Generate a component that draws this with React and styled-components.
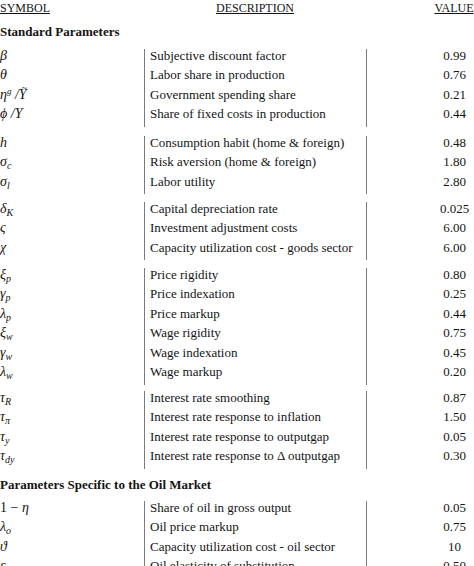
import React from "react";
import styled, { createGlobalStyle } from "styled-components";

const GlobalStyle = createGlobalStyle`
  html, body {
    margin: 0;
    padding: 0;
    background: #fff;
    overflow: hidden;
  }
  body {
    width: 474px;
    height: 566px;
    font-family: "Liberation Serif", "Times New Roman", serif;
    color: #141414;
  }
`;

const columns = "144px 222px 176px";

const Page = styled.div`
  width: 542px;
  display: flex;
  flex-direction: column;
`;

const Header = styled.div`
  display: grid;
  grid-template-columns: ${columns};
  height: 17px;
  line-height: 17px;
  font-size: 12px;
`;

const HeadCell = styled.div`
  text-align: ${(p) => (p.$center ? "center" : "left")};
  text-decoration: underline;
  text-underline-offset: 1px;
  text-decoration-thickness: 1px;
  white-space: nowrap;
`;

const Heading = styled.div`
  margin-top: ${(p) => p.$gap}px;
  font-size: 13px;
  font-weight: bold;
  line-height: 19.5px;
  white-space: nowrap;
`;

const Group = styled.div`
  margin-top: ${(p) => p.$gap}px;
  display: grid;
  grid-template-columns: ${columns};
  grid-auto-rows: 19.5px;
  font-size: 13px;
`;

const Cell = styled.div`
  line-height: 14.6px;
  padding-bottom: 4.9px;
  white-space: nowrap;
`;

const Symbol = styled(Cell)`
  font-style: italic;
  font-size: 14px;

  sub {
    font-size: 10px;
    vertical-align: -3px;
    line-height: 0;
  }
  sup {
    font-size: 9px;
    vertical-align: 5px;
    line-height: 0;
  }
`;

const Upright = styled.span`
  font-style: normal;
`;

const Tilde = styled.span`
  display: inline-block;
  position: relative;
  &::after {
    content: "~";
    position: absolute;
    left: 3px;
    top: -7px;
    font-size: 10px;
    font-style: normal;
  }
`;

const Description = styled(Cell)`
  border-left: 1px solid #7b7b7b;
  padding-left: 5px;
`;

const Value = styled(Cell)`
  border-left: 1px solid #7b7b7b;
  text-align: center;
`;

const groups = [
  {
    gap: 6.9,
    rows: [
      [<>β</>, "Subjective discount factor", "0.99"],
      [<>θ</>, "Labor share in production", "0.76"],
      [<>η<sup>g</sup> /<Tilde>Y</Tilde></>, "Government spending share", "0.21"],
      [<>ϕ /Y</>, "Share of fixed costs in production", "0.44"],
    ],
  },
  {
    gap: 9,
    rows: [
      [<>h</>, "Consumption habit (home & foreign)", "0.48"],
      [<>σ<sub>c</sub></>, "Risk aversion (home & foreign)", "1.80"],
      [<>σ<sub>l</sub></>, "Labor utility", "2.80"],
    ],
  },
  {
    gap: 7.5,
    rows: [
      [<>δ<sub>K</sub></>, "Capital depreciation rate", "0.025"],
      [<>ς</>, "Investment adjustment costs", "6.00"],
      [<>χ</>, "Capacity utilization cost - goods sector", "6.00"],
    ],
  },
  {
    gap: 7.5,
    rows: [
      [<>ξ<sub>p</sub></>, "Price rigidity", "0.80"],
      [<>γ<sub>p</sub></>, "Price indexation", "0.25"],
      [<>λ<sub>p</sub></>, "Price markup", "0.44"],
      [<>ξ<sub>w</sub></>, "Wage rigidity", "0.75"],
      [<>γ<sub>w</sub></>, "Wage indexation", "0.45"],
      [<>λ<sub>w</sub></>, "Wage markup", "0.20"],
    ],
  },
  {
    gap: 6,
    rows: [
      [<>τ<sub>R</sub></>, "Interest rate smoothing", "0.87"],
      [<>τ<sub>π</sub></>, "Interest rate response to inflation", "1.50"],
      [<>τ<sub>y</sub></>, "Interest rate response to outputgap", "0.05"],
      [<>τ<sub>dy</sub></>, "Interest rate response to Δ outputgap", "0.30"],
    ],
  },
];

const oilRows = [
  [<><Upright>1 − </Upright>η</>, "Share of oil in gross output", "0.05"],
  [<>λ<sub>o</sub></>, "Oil price markup", "0.75"],
  [<>ϑ</>, "Capacity utilization cost - oil sector", "10"],
  [<>ε<sub>o</sub></>, "Oil elasticity of substitution", "0.50"],
];

const Row = ({ symbol, desc, value }) => (
  <>
    <Symbol>{symbol}</Symbol>
    <Description>{desc}</Description>
    <Value>{value}</Value>
  </>
);

const Block = ({ gap, rows }) => (
  <Group $gap={gap}>
    {rows.map(([s, d, v], i) => (
      <Row key={i} symbol={s} desc={d} value={v} />
    ))}
  </Group>
);

export default function App() {
  return (
    <Page>
      <GlobalStyle />
      <Header>
        <HeadCell>SYMBOL</HeadCell>
        <HeadCell $center>DESCRIPTION</HeadCell>
        <HeadCell $center>VALUE</HeadCell>
      </Header>
      <Heading $gap={5.2}>Standard Parameters</Heading>
      {groups.map((g, i) => (
        <Block key={i} gap={g.gap} rows={g.rows} />
      ))}
      <Heading $gap={6.6}>Parameters Specific to the Oil Market</Heading>
      <Block gap={5.9} rows={oilRows} />
    </Page>
  );
}
